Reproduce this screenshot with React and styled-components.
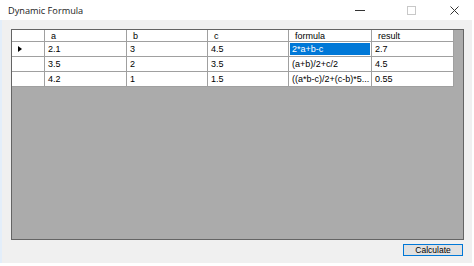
import React from "react";
import styled, { createGlobalStyle } from "styled-components";

const GlobalStyle = createGlobalStyle`
  html, body {
    margin: 0;
    padding: 0;
    background: #ffffff;
  }
`;

const columns = [
  { key: "a", title: "a", width: 82 },
  { key: "b", title: "b", width: 81 },
  { key: "c", title: "c", width: 81 },
  { key: "formula", title: "formula", width: 83 },
  { key: "result", title: "result", width: 82 },
];

const rows = [
  { a: "2.1", b: "3", c: "4.5", formula: "2*a+b-c", result: "2.7", current: true },
  { a: "3.5", b: "2", c: "3.5", formula: "(a+b)/2+c/2", result: "4.5" },
  { a: "4.2", b: "1", c: "1.5", formula: "((a*b-c)/2+(c-b)*5...", result: "0.55" },
];

export const Window = styled.div`
  width: 474px;
  height: 266px;
  display: flex;
  flex-direction: column;
  background: #ffffff;
  font-family: "Liberation Sans", Arial, sans-serif;
  overflow: hidden;
`;

export const TitleBar = styled.div`
  height: 20px;
  display: flex;
  align-items: center;
  padding-left: 8px;
  background: #ffffff;
`;

export const Title = styled.span`
  flex: 1;
  font-family: "Open Sans", "Noto Sans", sans-serif;
  font-size: 9.2px;
  color: #1a1a1a;
`;

export const Controls = styled.div`
  display: flex;
  align-items: center;
  height: 100%;
`;

export const ControlButton = styled.div`
  width: 46px;
  height: 100%;
  display: flex;
  align-items: center;
  justify-content: center;
  &.min {
    width: 56px;
  }
  &.close {
    width: 40px;
  }
`;

export const Client = styled.div`
  flex: 1;
  display: flex;
  flex-direction: column;
  background: #f0f0f0;
  border-left: 2px solid #e3eefa;
  margin-right: 2px;
  margin-bottom: 3px;
  padding: 9px 8px 0 9px;
`;

export const GridBox = styled.div`
  height: 209px;
  border: 1px solid #646464;
  background: #ababab;
  overflow: hidden;
`;

export const GridRow = styled.div`
  display: flex;
  height: ${(p) => p.$height}px;
`;

export const Cell = styled.div`
  box-sizing: border-box;
  width: ${(p) => p.$width}px;
  flex-shrink: 0;
  display: flex;
  align-items: center;
  padding-left: ${(p) => (p.$header ? 6 : 3)}px;
  background: #ffffff;
  border-right: 1px solid #a0a0a0;
  border-bottom: 1px solid #a0a0a0;
  font-size: 9px;
  color: #000000;
  white-space: nowrap;
  overflow: hidden;
  &.selected {
    background: #0078d7;
    color: #ffffff;
    box-shadow: inset 0 0 0 1px #ffffff;
  }
`;

export const RowHeader = styled(Cell)`
  padding-left: 6px;
`;

export const CurrentArrow = styled.span`
  width: 0;
  height: 0;
  border-top: 3px solid transparent;
  border-bottom: 3px solid transparent;
  border-left: 4px solid #000000;
`;

export const Footer = styled.div`
  display: flex;
  justify-content: flex-end;
  padding-top: 4px;
  padding-right: 1px;
`;

export const Button = styled.button`
  width: 60px;
  height: 12px;
  padding: 0;
  margin: 0;
  border: 1px solid #0078d7;
  background: #e1e1e1;
  box-shadow: inset 0 0 0 1px #e1e1e1;
  font-family: "Liberation Sans", Arial, sans-serif;
  font-size: 8.5px;
  line-height: 10px;
  color: #000000;
`;

function App() {
  return (
    <Window>
      <GlobalStyle />
      <TitleBar>
        <Title>Dynamic Formula</Title>
        <Controls>
          <ControlButton className="min">
            <svg width="10" height="10" viewBox="0 0 10 10">
              <line x1="0" y1="5.5" x2="10" y2="5.5" stroke="#333" strokeWidth="1" />
            </svg>
          </ControlButton>
          <ControlButton>
            <svg width="9" height="9" viewBox="0 0 9 9">
              <rect x="0.5" y="0.5" width="8" height="8" fill="none" stroke="#c8c8c8" strokeWidth="1" />
            </svg>
          </ControlButton>
          <ControlButton className="close">
            <svg width="9" height="9" viewBox="0 0 9 9">
              <path d="M0.5 0.5 L8.5 8.5 M8.5 0.5 L0.5 8.5" stroke="#333" strokeWidth="1" />
            </svg>
          </ControlButton>
        </Controls>
      </TitleBar>
      <Client>
        <GridBox>
          <GridRow $height={12}>
            <RowHeader $width={33} />
            {columns.map((col) => (
              <Cell key={col.key} $width={col.width} $header>
                {col.title}
              </Cell>
            ))}
          </GridRow>
          {rows.map((row, i) => (
            <GridRow key={i} $height={15}>
              <RowHeader $width={33}>{row.current && <CurrentArrow />}</RowHeader>
              {columns.map((col) => (
                <Cell
                  key={col.key}
                  $width={col.width}
                  className={row.current && col.key === "formula" ? "selected" : ""}
                >
                  {row[col.key]}
                </Cell>
              ))}
            </GridRow>
          ))}
        </GridBox>
        <Footer>
          <Button>Calculate</Button>
        </Footer>
      </Client>
    </Window>
  );
}

export default App;
